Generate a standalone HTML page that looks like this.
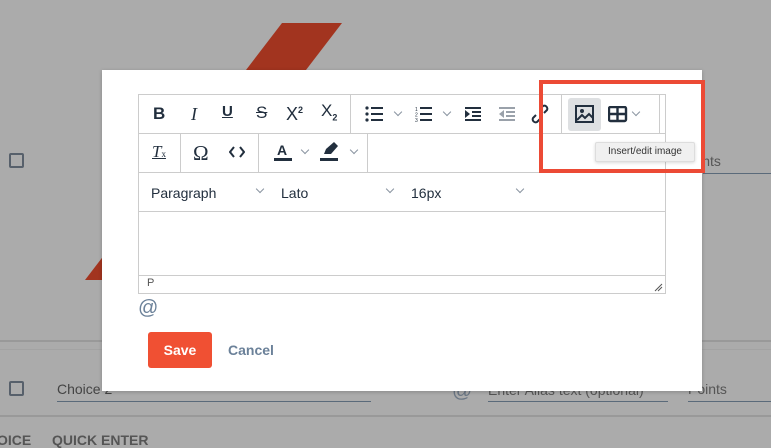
<!DOCTYPE html>
<html><head><style>
*{box-sizing:border-box;margin:0;padding:0}
body{width:771px;height:444px;overflow:hidden;background:#ababab;font-family:"Liberation Sans",sans-serif;position:relative}
.a{position:absolute}
.tb{position:absolute;color:#222f3e;font-size:16px}
.sep{position:absolute;width:1px;background:#ccc}
.hl{position:absolute;height:1px;background:#ccc}
.chev{position:absolute;width:6px;height:6px;border-right:1.5px solid #8a94a0;border-bottom:1.5px solid #8a94a0;transform:rotate(45deg)}
</style></head><body>
<svg class="a" style="left:0;top:0" width="771" height="444"><polygon points="282,23 342,23 145,280 85,280" fill="#a2341f"/></svg>
<div class="a" style="left:9px;top:153px;width:15px;height:15px;border:2px solid #57606b;border-radius:2px"></div>
<div class="a" style="left:682px;top:153px;font-size:14px;color:#555">Points</div>
<div class="a" style="left:703px;top:173px;width:68px;height:1px;background:#5a6a7a"></div>
<div class="a" style="left:0;top:340px;width:771px;height:2px;background:#999"></div>
<div class="a" style="left:0;top:349px;width:771px;height:1px;background:#a3a3a3"></div>
<div class="a" style="left:9px;top:381px;width:15px;height:15px;border:2px solid #57606b;border-radius:2px"></div>
<div class="a" style="left:57px;top:381px;font-size:14px;color:#444">Choice 2</div>
<div class="a" style="left:57px;top:401px;width:314px;height:1px;background:#5a6a7a"></div>
<div class="a" style="left:452px;top:380px;font-size:20px;color:#6b7785">@</div>
<div class="a" style="left:488px;top:382px;font-size:14px;color:#555">Enter Alias text (optional)</div>
<div class="a" style="left:488px;top:401px;width:180px;height:1px;background:#5a6a7a"></div>
<div class="a" style="left:688px;top:381px;font-size:14px;color:#555">Points</div>
<div class="a" style="left:688px;top:401px;width:83px;height:1px;background:#5a6a7a"></div>
<div class="a" style="left:0;top:415px;width:771px;height:2px;background:#999"></div>
<div class="a" style="left:-3px;top:432px;font-size:14px;font-weight:bold;color:#555">OICE</div>
<div class="a" style="left:52px;top:432px;font-size:14px;font-weight:bold;color:#555">QUICK ENTER</div>

<div class="a" style="left:102px;top:70px;width:600px;height:321px;background:#fff;box-shadow:0 1px 4px rgba(0,0,0,.2)">
<div class="a" style="left:36px;top:24px;width:528px;height:200px;border:1px solid #ccc">
 <div class="hl" style="left:0;top:38px;width:526px"></div>
 <div class="hl" style="left:0;top:77px;width:526px"></div>
 <div class="hl" style="left:0;top:116px;width:526px"></div>
 <div class="hl" style="left:0;top:180px;width:526px"></div>
 <div class="sep" style="left:211px;top:0;height:38px"></div>
 <div class="sep" style="left:422px;top:0;height:38px"></div>
 <div class="sep" style="left:520px;top:0;height:38px"></div>
 <div class="sep" style="left:41px;top:38px;height:39px"></div>
 <div class="sep" style="left:119px;top:38px;height:39px"></div>
 <div class="sep" style="left:228px;top:38px;height:39px"></div>
 <div class="tb" style="left:14px;top:9px;font-weight:bold;font-size:17px">B</div>
 <div class="tb" style="left:52px;top:9px;font-family:'Liberation Serif',serif;font-style:italic;font-size:18px">I</div>
 <div class="tb" style="left:83px;top:8px;text-decoration:underline;font-size:15px;font-weight:bold">U</div>
 <div class="tb" style="left:117px;top:8px;text-decoration:line-through;font-size:17px">S</div>
 <div class="tb" style="left:147px;top:9px;font-size:18px">X<sup style="font-size:9px;font-weight:bold">2</sup></div>
 <div class="tb" style="left:182px;top:6px;font-size:17px">X<sub style="font-size:9px;font-weight:bold">2</sub></div>
 <svg class="a" style="left:226px;top:11px" width="20" height="16"><g fill="#222f3e"><circle cx="2" cy="2" r="1.6"/><circle cx="2" cy="8" r="1.6"/><circle cx="2" cy="14" r="1.6"/><rect x="6" y="1" width="12" height="2"/><rect x="6" y="7" width="12" height="2"/><rect x="6" y="13" width="12" height="2"/></g></svg>
 <div class="chev" style="left:256px;top:14px"></div>
 <svg class="a" style="left:276px;top:11px" width="20" height="16"><g fill="#222f3e"><text x="0" y="5" font-size="5">1</text><text x="0" y="10.5" font-size="5">2</text><text x="0" y="16" font-size="5">3</text><rect x="5" y="1" width="12" height="2"/><rect x="5" y="7" width="12" height="2"/><rect x="5" y="13" width="12" height="2"/></g></svg>
 <div class="chev" style="left:305px;top:14px"></div>
 <svg class="a" style="left:326px;top:11px" width="18" height="16"><g fill="#222f3e"><rect x="0" y="1" width="16" height="2"/><rect x="7" y="5" width="9" height="2"/><rect x="7" y="9" width="9" height="2"/><rect x="0" y="13" width="16" height="2"/><polygon points="0,4 5,8 0,12"/></g></svg>
 <svg class="a" style="left:360px;top:11px" width="18" height="16"><g fill="#9aa1aa"><rect x="0" y="1" width="16" height="2"/><rect x="7" y="5" width="9" height="2"/><rect x="7" y="9" width="9" height="2"/><rect x="0" y="13" width="16" height="2"/><polygon points="5,4 0,8 5,12"/></g></svg>
 <svg class="a" style="left:392px;top:9px" width="20" height="20"><g fill="none" stroke="#222f3e" stroke-width="2"><path d="M9 5l3-3a3 3 0 014 4l-3 3"/><path d="M9 15l-3 3a3 3 0 01-4-4l3-3"/></g></svg>
 <div class="a" style="left:429px;top:3px;width:33px;height:33px;background:#dee0e2;border-radius:3px"></div>
 <svg class="a" style="left:436px;top:10px" width="20" height="19"><rect x="1" y="1" width="17" height="16" fill="none" stroke="#222f3e" stroke-width="2"/><circle cx="7" cy="6" r="2" fill="#222f3e"/><path d="M2 15l5-5 3 3 4-4 4 4" fill="none" stroke="#222f3e" stroke-width="2"/></svg>
 <svg class="a" style="left:469px;top:11px" width="20" height="17"><rect x="1" y="1" width="17" height="14" rx="1.5" fill="none" stroke="#222f3e" stroke-width="2.4"/><path d="M1 8h17M9.5 1v14" stroke="#222f3e" stroke-width="2.4"/></svg>
 <div class="chev" style="left:494px;top:14px"></div>
 <div class="tb" style="left:13px;top:47px;font-family:'Liberation Serif',serif;font-style:italic;text-decoration:underline;font-size:17px">T<span style="font-size:9px;font-style:normal;text-decoration:none">x</span></div>
 <div class="tb" style="left:54px;top:46px;font-family:'Liberation Serif',serif;font-size:21px">Ω</div>
 <svg class="a" style="left:90px;top:51px" width="16" height="12"><path d="M5 1L1 6l4 5M11 1l4 5-4 5" fill="none" stroke="#222f3e" stroke-width="2"/></svg>
 <div class="tb" style="left:138px;top:47px;font-size:14px;font-weight:bold">A</div>
 <div class="a" style="left:135px;top:63px;width:18px;height:3px;background:#222f3e"></div>
 <div class="chev" style="left:163px;top:52px"></div>
 <svg class="a" style="left:183px;top:47px" width="18" height="14"><path d="M2 12l2-5 8-7 4 4-7 8z" fill="#222f3e"/></svg>
 <div class="a" style="left:181px;top:63px;width:18px;height:3px;background:#222f3e"></div>
 <div class="chev" style="left:212px;top:52px"></div>
 <div class="tb" style="left:12px;top:90px;font-size:14px">Paragraph</div>
 <div class="chev" style="left:118px;top:91px"></div>
 <div class="tb" style="left:142px;top:90px;font-size:14px">Lato</div>
 <div class="chev" style="left:248px;top:91px"></div>
 <div class="tb" style="left:272px;top:90px;font-size:14px">16px</div>
 <div class="chev" style="left:378px;top:91px"></div>
 <div class="a" style="left:8px;top:182px;font-size:11px;color:#555">P</div>
 <svg class="a" style="left:514px;top:187px" width="10" height="10"><path d="M2 9L9 2M5 9L9 5" stroke="#555" stroke-width="1"/></svg>
</div>
<div class="a" style="left:36px;top:227px;font-size:20px;color:#6b8199">@</div>
<div class="a" style="left:46px;top:262px;width:64px;height:36px;background:#f05033;border-radius:3px;color:#fff;font-weight:bold;font-size:14px;text-align:center;line-height:36px">Save</div>
<div class="a" style="left:126px;top:272px;font-size:14px;font-weight:bold;color:#6b8199">Cancel</div>
</div>
<div class="a" style="left:539px;top:80px;width:166px;height:93px;border:4px solid #ec4a35"></div>
<div class="a" style="left:595px;top:142px;width:100px;height:20px;background:#f0f0f0;border:1px solid #ddd;border-radius:2px;font-size:10px;color:#333;line-height:18px;text-align:center;box-shadow:0 1px 3px rgba(0,0,0,.15)">Insert/edit image</div>
</body></html>
